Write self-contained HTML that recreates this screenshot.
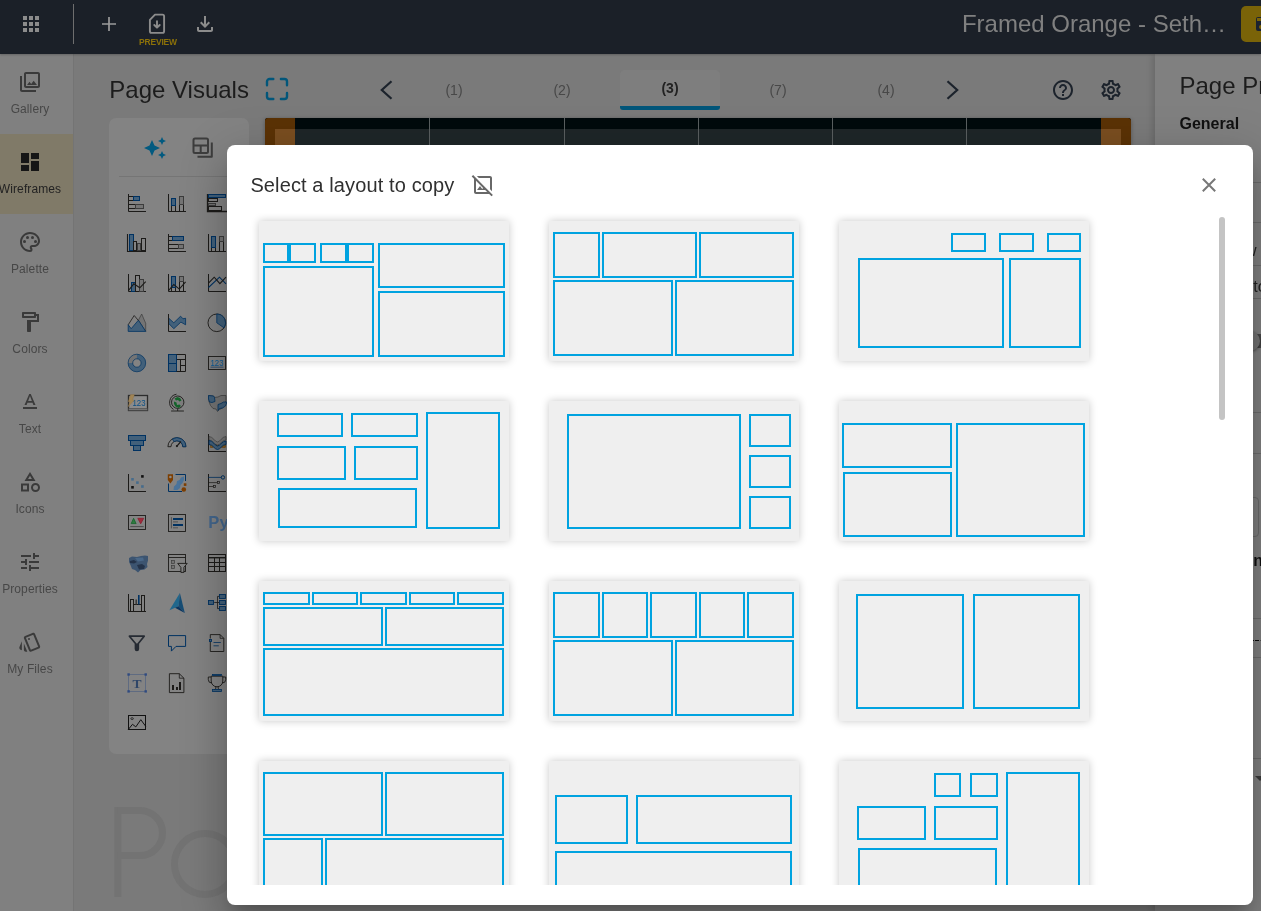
<!DOCTYPE html>
<html>
<head>
<meta charset="utf-8">
<title>Select a layout to copy</title>
<style>
*{box-sizing:border-box;margin:0;padding:0}
html,body{width:1261px;height:911px;overflow:hidden}
body{font-family:"Liberation Sans",sans-serif;background:#7a7a7a;position:relative;color:#1a1a1a}
.abs{position:absolute}
#root{position:absolute;left:0;top:0;width:1261px;height:911px;will-change:transform}
#topbar{position:absolute;left:0;top:0;width:1261px;height:54px;background:#1b2028;box-shadow:0 1px 2px rgba(0,0,0,.22);z-index:2}
#sidebar{position:absolute;left:0;top:54px;width:74px;height:857px;background:#808080;border-right:1px solid #747474}
.sitem{position:absolute;left:0;width:73px;height:80px;text-align:center}
.sitem svg{position:absolute;left:18px;top:16px}
.sitem span{position:absolute;left:-20px;width:100px;top:48px;font-size:12px;line-height:14px;color:#474747;letter-spacing:.1px}
.sitem.active{background:#807a68}
.sitem.active span{color:#222}
#vpanel{position:absolute;left:109px;top:118px;width:140px;height:636px;background:#838383;border-radius:7px}
.vi{position:absolute;width:20px;height:20px}
#rpanel{position:absolute;left:1155px;top:54px;width:106px;height:857px;background:#808080;box-shadow:-2px 0 7px rgba(0,0,0,.16)}
#modal{position:absolute;left:227px;top:145px;width:1026px;height:760px;background:#fff;border-radius:8px;
 box-shadow:0 11px 15px -7px rgba(0,0,0,.2),0 24px 38px 3px rgba(0,0,0,.14),0 9px 46px 8px rgba(0,0,0,.12)}
#scroll{position:absolute;left:0;top:68px;width:1026px;height:672px;overflow:hidden}
.card{position:absolute;width:250px;height:140px;background:#efefef;box-shadow:0 0 8px rgba(0,0,0,.22)}
.card svg{display:block}
.card rect{fill:none;stroke:#00a3e0;stroke-width:2;shape-rendering:crispEdges}
.tab{position:absolute;top:82px;width:60px;text-align:center;font-size:14px;line-height:16px;color:#484848}
</style>
</head>
<body>
<div id="root">
<!-- top bar -->
<div id="topbar">
  <svg class="abs" style="left:19px;top:12px" width="24" height="24" viewBox="0 0 24 24" fill="#8c8c8c"><path d="M4 8h4V4H4v4zm6 12h4v-4h-4v4zm-6 0h4v-4H4v4zm0-6h4v-4H4v4zm6 0h4v-4h-4v4zm6-10v4h4V4h-4zm-6 4h4V4h-4v4zm6 6h4v-4h-4v4zm0 6h4v-4h-4v4z"/></svg>
  <div class="abs" style="left:73px;top:4px;width:1px;height:40px;background:#6e6e6e"></div>
  <svg class="abs" style="left:97px;top:12px" width="24" height="24" viewBox="0 0 24 24" fill="none" stroke="#9a9a9a" stroke-width="1.7"><path d="M12 5v14M5 12h14"/></svg>
  <svg class="abs" style="left:145px;top:10px" width="24" height="26" viewBox="0 0 24 26" fill="none" stroke="#8c8c8c" stroke-width="1.9" stroke-linejoin="round" stroke-linecap="round"><path d="M10 4.6H17.5a1.6 1.6 0 0 1 1.6 1.6V21.300a1.600 1.600 0 0 1-1.600 1.600H6.500a1.600 1.600 0 0 1-1.600-1.600V9.800Z"/><path d="M12 11.300v6M9.300 15l2.700 2.700 2.700-2.700"/></svg>
  <div class="abs" style="left:132px;top:37px;width:52px;text-align:center;font-size:8.5px;font-weight:bold;color:#8c7109;letter-spacing:-.2px;line-height:10px">PREVIEW</div>
  <svg class="abs" style="left:193px;top:12px" width="24" height="24" viewBox="0 0 24 24" fill="#8c8c8c"><path d="M18 15v3H6v-3H4v3c0 1.1.9 2 2 2h12c1.1 0 2-.9 2-2v-3h-2zm-1-4l-1.410-1.410L13 12.170V4h-2v8.170L8.410 9.590 7 11l5 5 5-5z"/></svg>
  <div class="abs" style="left:900px;top:10px;width:326px;text-align:right;font-size:24px;line-height:28px;color:#808080;white-space:nowrap">Framed Orange - Seth…</div>
  <div class="abs" style="left:1241px;top:6px;width:30px;height:36px;background:#7a6308;border-radius:5px"></div>
  <div class="abs" style="left:1255.500px;top:16.800px;width:10px;height:14.700px;background:#1b2230;border-radius:2px 0 0 2px"></div><div class="abs" style="left:1257.200px;top:18.300px;width:6px;height:3px;background:#7a6308"></div><div class="abs" style="left:1259.300px;top:25.300px;width:4px;height:4px;border-radius:2px;background:#7a6308"></div>
</div>
<!-- sidebar -->
<div id="sidebar">
  <div class="sitem" style="top:0"><svg width="24" height="24" viewBox="0 0 24 24" fill="#3a3a3a" ><path d="M20 4v12H8V4h12m0-2H8c-1.100 0-2 .9-2 2v12c0 1.100.9 2 2 2h12c1.100 0 2-.9 2-2V4c0-1.100-.9-2-2-2zm-8.500 9.670l1.690 2.260 2.480-3.100L19 15H9zM2 6v14c0 1.100.9 2 2 2h14v-2H4V6H2z"/></svg><span>Gallery</span></div>
  <div class="sitem active" style="top:80px"><svg width="24" height="24" viewBox="0 0 24 24" fill="#161616"><path d="M3 13h8V3H3v10zm0 8h8v-6H3v6zm10 0h8V11h-8v10zm0-18v6h8V3h-8z"/></svg><span>Wireframes</span></div>
  <div class="sitem" style="top:160px"><svg width="24" height="24" viewBox="0 0 24 24" fill="#3a3a3a"><path d="M12 22C6.490 22 2 17.510 2 12S6.490 2 12 2s10 4.040 10 9c0 3.310-2.690 6-6 6h-1.770c-.28 0-.5.220-.5.500 0 .12.050.23.130.33.410.47.640 1.060.640 1.670A2.500 2.500 0 0 1 12 22zm0-18c-4.410 0-8 3.590-8 8s3.590 8 8 8c.28 0 .5-.22.5-.5a.54.54 0 0 0-.14-.35c-.41-.46-.63-1.050-.63-1.650a2.500 2.500 0 0 1 2.500-2.500H16c2.210 0 4-1.790 4-4 0-3.860-3.590-7-8-7z"/><circle cx="6.500" cy="11.500" r="1.500"/><circle cx="9.500" cy="7.500" r="1.500"/><circle cx="14.500" cy="7.500" r="1.500"/><circle cx="17.500" cy="11.500" r="1.500"/></svg><span>Palette</span></div>
  <div class="sitem" style="top:240px"><svg width="24" height="24" viewBox="0 0 24 24" fill="#3a3a3a"><path d="M18 4V3c0-.55-.45-1-1-1H5c-.55 0-1 .45-1 1v4c0 .55.450 1 1 1h12c.55 0 1-.45 1-1V6h1v4H9v11c0 .55.450 1 1 1h2c.55 0 1-.45 1-1v-9h8V4h-3zM16 6H6V4h10v2z"/></svg><span>Colors</span></div>
  <div class="sitem" style="top:320px"><svg width="24" height="24" viewBox="0 0 24 24" fill="#3a3a3a"><path d="M5 17v2h14v-2H5zm4.500-4.200h5l.9 2.200h2.100L12.750 4h-1.500L6.500 15h2.100l.9-2.200zM12 5.980L13.870 11h-3.740L12 5.980z"/></svg><span>Text</span></div>
  <div class="sitem" style="top:400px"><svg width="24" height="24" viewBox="0 0 24 24" fill="#3a3a3a"><path d="M12 2l-5.500 9h11L12 2zm0 3.840L13.930 9h-3.870L12 5.840zM17.500 13c-2.490 0-4.500 2.010-4.500 4.500s2.010 4.500 4.500 4.500 4.500-2.010 4.500-4.500-2.010-4.500-4.500-4.500zm0 7a2.500 2.500 0 0 1 0-5 2.500 2.500 0 0 1 0 5zM3 21.500h8v-8H3v8zm2-6h4v4H5v-4z"/></svg><span>Icons</span></div>
  <div class="sitem" style="top:480px"><svg width="24" height="24" viewBox="0 0 24 24" fill="#3a3a3a"><path d="M3 17v2h6v-2H3zM3 5v2h10V5H3zm10 16v-2h8v-2h-8v-2h-2v6h2zM7 9v2H3v2h4v2h2V9H7zm14 4v-2H11v2h10zm-6-4h2V7h4V5h-4V3h-2v6z"/></svg><span>Properties</span></div>
  <div class="sitem" style="top:560px"><svg width="24" height="24" viewBox="0 0 24 24" fill="#3a3a3a"><path d="M2.530 19.650l1.340.56v-9.030l-2.430 5.860c-.41 1.020.080 2.190 1.090 2.610zm19.500-3.700L17.070 3.980c-.31-.75-1.040-1.210-1.810-1.230-.26 0-.53.040-.79.150L7.100 5.950c-.75.310-1.210 1.030-1.230 1.800-.01.270.04.540.15.800l4.960 11.970c.31.760 1.050 1.220 1.830 1.230.26 0 .52-.05.77-.15l7.360-3.050c1.020-.42 1.510-1.590 1.090-2.600zm-9.200 3.800L7.870 7.790l7.350-3.040h.01l4.950 11.950-7.350 3.050zM5.880 19.750c0 1.100.9 2 2 2h1.450l-3.450-8.340v6.340z"/><circle cx="11" cy="9" r="1"/></svg><span>My Files</span></div>
</div>
<!-- header -->
<div class="abs" style="left:109.300px;top:75.800px;font-size:24px;line-height:28px;color:#1c1c1c;white-space:nowrap">Page Visuals</div>
<svg class="abs" style="left:265px;top:77px" width="24" height="24" viewBox="0 0 24 24" fill="none" stroke="#02567a" stroke-width="2.400" stroke-linecap="round" stroke-linejoin="round"><path d="M2 8.300V4.500a2.500 2.500 0 0 1 2.500-2.500H8.300M15.900 2h3.600a2.500 2.500 0 0 1 2.500 2.500V8.300M22 15.900v3.600a2.500 2.500 0 0 1-2.500 2.500H15.900M8.300 22H4.500a2.500 2.500 0 0 1-2.500-2.500V15.900"/></svg>
<svg class="abs" style="left:376px;top:78px" width="24" height="24" viewBox="0 0 24 24" fill="none" stroke="#1c232c" stroke-width="2.200"><path d="M15.500 3.200L5.800 12l9.700 8.800"/></svg>
<svg class="abs" style="left:939px;top:78px" width="24" height="24" viewBox="0 0 24 24" fill="none" stroke="#1c232c" stroke-width="2.200"><path d="M8.500 3.200L18.200 12l-9.700 8.800"/></svg>
<div class="abs" style="left:620px;top:70px;width:100px;height:40px;background:#7e7e7e;border-radius:5px 5px 3px 3px;border-bottom:4px solid #02567a"></div>
<div class="tab" style="left:424px">(1)</div>
<div class="tab" style="left:532px">(2)</div>
<div class="tab" style="left:640px;top:80px;font-weight:bold;color:#222">(3)</div>
<div class="tab" style="left:748px">(7)</div>
<div class="tab" style="left:856px">(4)</div>
<svg class="abs" style="left:1051px;top:78px" width="24" height="24" viewBox="0 0 24 24" fill="#1c232c"><path d="M11 18h2v-2h-2v2zm1-16C6.480 2 2 6.480 2 12s4.480 10 10 10 10-4.480 10-10S17.520 2 12 2zm0 18c-4.410 0-8-3.590-8-8s3.590-8 8-8 8 3.590 8 8-3.590 8-8 8zm0-14c-2.210 0-4 1.790-4 4h2c0-1.100.9-2 2-2s2 .9 2 2c0 2-3 1.750-3 5h2c0-2.250 3-2.500 3-5 0-2.210-1.790-4-4-4z"/></svg>
<svg class="abs" style="left:1099px;top:78px" width="24" height="24" viewBox="0 0 24 24" fill="#1c232c"><path d="M19.430 12.980c.04-.32.070-.64.070-.98 0-.34-.03-.66-.07-.98l2.110-1.650c.19-.15.240-.42.120-.64l-2-3.460c-.09-.16-.26-.25-.44-.25-.06 0-.12.010-.17.030l-2.490 1c-.52-.4-1.080-.73-1.690-.98l-.38-2.650C14.460 2.180 14.250 2 14 2h-4c-.25 0-.46.180-.49.420l-.38 2.650c-.61.250-1.170.590-1.690.98l-2.490-1c-.06-.02-.12-.03-.18-.03-.17 0-.34.090-.43.250l-2 3.460c-.13.220-.07.490.12.640l2.110 1.650c-.04.320-.07.650-.07.980 0 .33.030.66.070.98l-2.110 1.650c-.19.150-.24.420-.12.640l2 3.460c.09.160.26.250.44.250.06 0 .12-.01.170-.03l2.490-1c.52.400 1.080.73 1.690.98l.38 2.650c.03.240.24.420.49.420h4c.25 0 .46-.18.490-.42l.38-2.650c.61-.25 1.170-.59 1.690-.98l2.490 1c.06.020.12.030.18.030.17 0 .34-.09.43-.25l2-3.460c.12-.22.070-.49-.12-.64l-2.110-1.650zm-1.980-1.710c.04.310.050.520.050.730 0 .21-.02.430-.05.730l-.14 1.130.89.700 1.080.84-.7 1.210-1.270-.51-1.040-.42-.9.680c-.43.320-.84.560-1.250.73l-1.060.43-.16 1.130-.2 1.350h-1.400l-.19-1.350-.16-1.130-1.060-.43c-.43-.18-.83-.41-1.230-.71l-.91-.7-1.060.43-1.270.51-.7-1.210 1.080-.84.890-.7-.14-1.130c-.03-.31-.05-.54-.05-.74s.020-.43.050-.73l.14-1.130-.89-.7-1.080-.84.700-1.210 1.270.51 1.040.42.900-.68c.43-.32.840-.56 1.250-.73l1.060-.43.160-1.130.2-1.350h1.390l.19 1.350.16 1.130 1.060.43c.43.180.83.410 1.230.71l.91.700 1.060-.43 1.270-.51.700 1.210-1.070.85-.89.700.14 1.130zM12 8c-2.210 0-4 1.790-4 4s1.790 4 4 4 4-1.790 4-4-1.790-4-4-4zm0 6c-1.100 0-2-.9-2-2s.9-2 2-2 2 .9 2 2-.9 2-2 2z"/></svg>
<!-- canvas -->
<div class="abs" style="left:265px;top:118px;width:866px;height:60px;background:#1e2628;border-radius:3px 3px 0 0;overflow:hidden;box-shadow:0 1px 4px rgba(0,0,0,.3)">
  <div class="abs" style="left:0;top:0;width:866px;height:11px;background:#000a0c"></div>
  <div class="abs" style="left:0;top:0;width:30px;height:60px;background:#5b3205"></div>
  <div class="abs" style="left:10px;top:11px;width:20px;height:60px;background:#7a4e20"></div>
  <div class="abs" style="left:836px;top:0;width:30px;height:60px;background:#5b3205"></div>
  <div class="abs" style="left:836px;top:11px;width:20px;height:60px;background:#7a4e20"></div>
  <div class="abs" style="left:164px;top:0;width:1px;height:60px;background:#5a5f60"></div>
  <div class="abs" style="left:299px;top:0;width:1px;height:60px;background:#5a5f60"></div>
  <div class="abs" style="left:433px;top:0;width:1px;height:60px;background:#5a5f60"></div>
  <div class="abs" style="left:567px;top:0;width:1px;height:60px;background:#5a5f60"></div>
  <div class="abs" style="left:701px;top:0;width:1px;height:60px;background:#5a5f60"></div>
</div>
<!-- visuals panel -->
<div id="vpanel">
  <svg class="abs" style="left:34px;top:18px" width="24" height="24" viewBox="0 0 24 24" fill="#025a80"><path d="M19 9l1.250-2.750L23 5l-2.750-1.250L19 1l-1.250 2.750L15 5l2.750 1.250L19 9zm-7.500.5L9 4 6.500 9.500 1 12l5.500 2.500L9 20l2.500-5.500L17 12l-5.500-2.500zM19 15l-1.250 2.750L15 19l2.750 1.250L19 23l1.250-2.750L23 19l-2.750-1.250L19 15z"/></svg>
  <svg class="abs" style="left:83px;top:19px" width="22" height="22" viewBox="0 0 22 22" fill="none" stroke="#3d3d3d" stroke-width="2" stroke-linejoin="round"><rect x="1.500" y="1.500" width="14.500" height="14.500" rx="1.500"/><path d="M1.500 8.500H16M8.700 8.500V16"/><path d="M19.800 5.500V19.800H5.500"/></svg>
  <div class="abs" style="left:10px;top:58px;width:140px;height:1px;background:#757575"></div>
<svg class="vi" style="left:18px;top:75px" width="20" height="20" viewBox="0 0 20 20" overflow="visible"><path d="M1.5 1V18.5H19" fill="none" stroke="#1c1b19" stroke-width="1"/><rect x="1.5" y="3.5" width="11.00" height="4.00" fill="none" stroke="#1c1b19" stroke-width="1"/><rect x="6.5" y="3.5" width="6.00" height="4.00" fill="#42607a" stroke="#003262" stroke-width="1"/><rect x="1.5" y="11.5" width="15.00" height="4.00" fill="none" stroke="#1c1b19" stroke-width="1"/><rect x="8.5" y="11.5" width="8.00" height="4.00" fill="#747474" stroke="#3c3c3c" stroke-width="1"/></svg>
<svg class="vi" style="left:58px;top:75px" width="20" height="20" viewBox="0 0 20 20" overflow="visible"><path d="M1.5 1V18.5H19" fill="none" stroke="#1c1b19" stroke-width="1"/><rect x="4.5" y="5.5" width="4.00" height="13.00" fill="none" stroke="#1c1b19" stroke-width="1"/><rect x="4.5" y="5.5" width="4.00" height="7.00" fill="#42607a" stroke="#003262" stroke-width="1"/><rect x="12.5" y="3.5" width="4.00" height="15.00" fill="none" stroke="#1c1b19" stroke-width="1"/><rect x="12.5" y="3.5" width="4.00" height="8.00" fill="#747474" stroke="#3c3c3c" stroke-width="1"/></svg>
<svg class="vi" style="left:98px;top:75px" width="20" height="20" viewBox="0 0 20 20" overflow="visible"><path d="M0.5 1V18.5H20" fill="none" stroke="#1c1b19" stroke-width="1.3"/><rect x="1.5" y="1.5" width="17.00" height="3.00" fill="#42607a" stroke="#003262" stroke-width="1"/><rect x="1.5" y="5.5" width="9.00" height="3.00" fill="none" stroke="#1c1b19" stroke-width="1"/><rect x="1.5" y="10.5" width="7.00" height="2.00" fill="#747474" stroke="#3c3c3c" stroke-width="1"/><rect x="1.5" y="13.5" width="13.00" height="4.00" fill="none" stroke="#1c1b19" stroke-width="1"/></svg>
<svg class="vi" style="left:18px;top:115px" width="20" height="20" viewBox="0 0 20 20" overflow="visible"><path d="M0.5 1V18.5H19" fill="none" stroke="#1c1b19" stroke-width="1.1"/><rect x="2.5" y="1.5" width="4.00" height="16.00" fill="#42607a" stroke="#003262" stroke-width="1"/><rect x="6.5" y="8.5" width="3.00" height="9.00" fill="none" stroke="#1c1b19" stroke-width="1"/><rect x="10.5" y="10.5" width="3.00" height="7.00" fill="#747474" stroke="#3c3c3c" stroke-width="1"/><rect x="14.5" y="5.5" width="4.00" height="12.00" fill="none" stroke="#1c1b19" stroke-width="1"/></svg>
<svg class="vi" style="left:58px;top:115px" width="20" height="20" viewBox="0 0 20 20" overflow="visible"><path d="M1.5 1V18.5H19" fill="none" stroke="#1c1b19" stroke-width="1"/><rect x="1.5" y="3.5" width="15.00" height="4.00" fill="none" stroke="#1c1b19" stroke-width="1"/><rect x="5.5" y="3.5" width="11.00" height="4.00" fill="#42607a" stroke="#003262" stroke-width="1"/><rect x="1.5" y="11.5" width="15.00" height="4.00" fill="none" stroke="#1c1b19" stroke-width="1"/><rect x="11.5" y="11.5" width="5.00" height="4.00" fill="#747474" stroke="#3c3c3c" stroke-width="1"/></svg>
<svg class="vi" style="left:98px;top:115px" width="20" height="20" viewBox="0 0 20 20" overflow="visible"><path d="M1.5 1V18.5H19" fill="none" stroke="#1c1b19" stroke-width="1"/><rect x="4.5" y="3.5" width="4.00" height="15.00" fill="none" stroke="#1c1b19" stroke-width="1"/><rect x="4.5" y="3.5" width="4.00" height="11.00" fill="#42607a" stroke="#003262" stroke-width="1"/><rect x="12.5" y="3.5" width="4.00" height="15.00" fill="none" stroke="#1c1b19" stroke-width="1"/><rect x="12.5" y="3.5" width="4.00" height="5.00" fill="#747474" stroke="#3c3c3c" stroke-width="1"/></svg>
<svg class="vi" style="left:18px;top:155px" width="20" height="20" viewBox="0 0 20 20" overflow="visible"><path d="M1.5 1V18.5H19" fill="none" stroke="#1c1b19" stroke-width="1"/><rect x="4.5" y="9.5" width="4.00" height="9.00" fill="#42607a" stroke="#003262" stroke-width="1"/><rect x="8.5" y="2.5" width="4.00" height="16.00" fill="none" stroke="#1c1b19" stroke-width="1"/><rect x="12.5" y="6.5" width="4.00" height="12.00" fill="#747474" stroke="#3c3c3c" stroke-width="1"/><path d="M1.6 17.4L6.8 10.8L12.8 14.8L18.7 8.6" fill="none" stroke="#1c1b19" stroke-width="1.1" stroke-linejoin="miter"/></svg>
<svg class="vi" style="left:58px;top:155px" width="20" height="20" viewBox="0 0 20 20" overflow="visible"><path d="M1.5 1V18.5H19" fill="none" stroke="#1c1b19" stroke-width="1"/><rect x="4.5" y="3.5" width="4.00" height="15.00" fill="none" stroke="#1c1b19" stroke-width="1"/><rect x="4.5" y="3.5" width="4.00" height="11.00" fill="#42607a" stroke="#003262" stroke-width="1"/><rect x="12.5" y="3.5" width="4.00" height="15.00" fill="none" stroke="#1c1b19" stroke-width="1"/><rect x="12.5" y="3.5" width="4.00" height="5.00" fill="#747474" stroke="#3c3c3c" stroke-width="1"/><path d="M1.7 17.4L6.8 11.5L12.3 16.1L18.6 8.8" fill="none" stroke="#1c1b19" stroke-width="1.1" stroke-linejoin="miter"/></svg>
<svg class="vi" style="left:98px;top:155px" width="20" height="20" viewBox="0 0 20 20" overflow="visible"><path d="M1.5 1V18.5H19" fill="none" stroke="#1c1b19" stroke-width="1"/><path d="M1.5 14.5L12.5 4.2L19 10.8" fill="none" stroke="#003262" stroke-width="1.1" stroke-linejoin="miter"/><path d="M1.5 10.2L7.2 4.2L12.9 10.6L19 4.2" fill="none" stroke="#1c1b19" stroke-width="1.1" stroke-linejoin="miter"/></svg>
<svg class="vi" style="left:18px;top:195px" width="20" height="20" viewBox="0 0 20 20" overflow="visible"><path d="M11.4 7.2L14.7 1L18.7 10.4L18.7 18.4Z" fill="#747474" stroke="#3c3c3c" stroke-width="0.7" stroke-linejoin="miter"/><path d="M1.2 18.4L1.2 11.8L4.2 15.7L11.4 7.2L18.7 18.4Z" fill="#42607a" stroke="#003262" stroke-width="0.8" stroke-linejoin="miter"/><path d="M1.2 11.8L7.2 2.5L11.4 7.5" fill="none" stroke="#1c1b19" stroke-width="0.8" stroke-linejoin="miter"/></svg>
<svg class="vi" style="left:58px;top:195px" width="20" height="20" viewBox="0 0 20 20" overflow="visible"><path d="M1.7 5.2L6.8 9.8L13.6 3.2L16 5.8L18.6 5.2L18.6 11.8L13.9 9.1L6.8 15.7L1.7 10.4Z" fill="#42607a" stroke="#003262" stroke-width="0.8" stroke-linejoin="miter"/><path d="M1.5 1V18.5H19" fill="none" stroke="#1c1b19" stroke-width="1"/></svg>
<svg class="vi" style="left:98px;top:195px" width="20" height="20" viewBox="0 0 20 20" overflow="visible"><circle cx="9.8" cy="9.8" r="8.8" fill="none" stroke="#1c1b19" stroke-width="0.9"/><path d="M9.8 9.8V1A8.8 8.8 0 0 1 17 14.850Z" fill="#42607a" stroke="#003262" stroke-width="0.8"/></svg>
<svg class="vi" style="left:18px;top:235px" width="20" height="20" viewBox="0 0 20 20" overflow="visible"><circle cx="9.9" cy="10" r="6.5" fill="none" stroke="#747474" stroke-width="4.600"/><path d="M9.9 3.5A6.500 6.500 0 1 1 3.400 10" fill="none" stroke="#42607a" stroke-width="4.600"/><circle cx="9.9" cy="10" r="8.800" fill="none" stroke="#003262" stroke-width="0.700"/><circle cx="9.900" cy="10" r="4.200" fill="none" stroke="#003262" stroke-width="0.700"/></svg>
<svg class="vi" style="left:58px;top:235px" width="20" height="20" viewBox="0 0 20 20" overflow="visible"><rect x="1.5" y="1.5" width="8.00" height="17.00" fill="#42607a" stroke="#003262" stroke-width="1"/><path d="M1.5 10.5L9.5 10.5" fill="none" stroke="#003262" stroke-width="1" stroke-linejoin="miter"/><path d="M9.5 1.5L18.5 1.5L18.5 18.5L9.5 18.5" fill="none" stroke="#1c1b19" stroke-width="1" stroke-linejoin="miter"/><path d="M10 6.5L18.5 6.5" fill="none" stroke="#1c1b19" stroke-width="1" stroke-linejoin="miter"/><path d="M13.5 6.5L13.5 18.5" fill="none" stroke="#1c1b19" stroke-width="1" stroke-linejoin="miter"/><path d="M13.5 12.5L18.5 12.5" fill="none" stroke="#1c1b19" stroke-width="1" stroke-linejoin="miter"/></svg>
<svg class="vi" style="left:98px;top:235px" width="20" height="20" viewBox="0 0 20 20" overflow="visible"><rect x="1.5" y="3.5" width="17.00" height="13.00" fill="none" stroke="#1c1b19" stroke-width="0.9"/><text x="10" y="12.600" font-size="9.500" text-anchor="middle" fill="#0b5a96" font-family="Liberation Sans" textLength="13" lengthAdjust="spacingAndGlyphs">123</text><path d="M3.5 14.2L16.5 14.2" fill="none" stroke="#003262" stroke-width="0.6" stroke-linejoin="miter"/></svg>
<svg class="vi" style="left:18px;top:275px" width="20" height="20" viewBox="0 0 20 20" overflow="visible"><rect x="1.5" y="2.5" width="19.00" height="15.00" fill="#8b8b8b" stroke="#2c2c2c" stroke-width="1.3"/><rect x="1.5" y="15.5" width="19.00" height="2.00" fill="#747474" stroke="#3c3c3c" stroke-width="0.5"/><text x="12" y="12.500" font-size="9.500" text-anchor="middle" fill="#0a4f85" font-family="Liberation Sans" textLength="13" lengthAdjust="spacingAndGlyphs">123</text><path d="M3.5 1.6L7.5 1.6L5.5 6.9L7.5 6.9L0.9 14.1L2.9 8.8L1.2 8.8Z" fill="#a08455" stroke="#8a7045" stroke-width="0.3" stroke-linejoin="miter"/></svg>
<svg class="vi" style="left:58px;top:275px" width="20" height="20" viewBox="0 0 20 20" overflow="visible"><circle cx="10.700" cy="9.200" r="6.200" fill="#7d7d7d" stroke="#1c1b19" stroke-width="0.900"/><path d="M7.500 5.500l3-1.500 2.500 1 1.500 2.500-2 1-1.500-1.500-2 .5zM7 8.500l2.500 1 .5 2.500 2.500-.5 1.500 1.500-2.500 2-3-1.500-1.500-2.500z" fill="#14642a"/><path d="M9.500 1.200A8.300 8.300 0 0 0 6.500 16.400" fill="none" stroke="#1c1b19" stroke-width="0.900"/><path d="M10.7 15.6L10.7 18" fill="none" stroke="#1c1b19" stroke-width="0.9" stroke-linejoin="miter"/><path d="M4.1 18L16.9 18" fill="none" stroke="#1c1b19" stroke-width="0.9" stroke-linejoin="miter"/></svg>
<svg class="vi" style="left:98px;top:275px" width="20" height="20" viewBox="0 0 20 20" overflow="visible"><path d="M1.500 2.500l5 .5 1 1.500 3.500-.5 3-1.500h5v5l-1.500 4-2 3.500-3 1.500-2 2-1.500-2.500-3-.5-2.500-3-1.500-4z" fill="#747474" stroke="#3c3c3c" stroke-width="0.700"/><path d="M1.500 2.500l5 .5 1 1.500.5 4-3 1-2.500-.5-1-3z" fill="#42607a" stroke="#003262" stroke-width="0.800"/><path d="M11 11.500l3-1 2.500-1.500h3.500l-1.500 4-3 2-3 .5-1.500 2z" fill="#42607a" stroke="#003262" stroke-width="0.800"/></svg>
<svg class="vi" style="left:18px;top:315px" width="20" height="20" viewBox="0 0 20 20" overflow="visible"><rect x="1.5" y="2.5" width="17.00" height="5.00" fill="#42607a" stroke="#003262" stroke-width="1"/><rect x="3.5" y="7.5" width="13.00" height="5.00" fill="#42607a" stroke="#003262" stroke-width="1"/><rect x="6.5" y="12.5" width="7.00" height="5.00" fill="#42607a" stroke="#003262" stroke-width="1"/></svg>
<svg class="vi" style="left:58px;top:315px" width="20" height="20" viewBox="0 0 20 20" overflow="visible"><path d="M0.900 13.700A9 9 0 0 1 18.900 13.700H15.800A5.900 5.900 0 0 0 4 13.700Z" fill="none" stroke="#1c1b19" stroke-width="0.900"/><path d="M5.400 5.900A9 9 0 0 1 18.900 13.700H15.800A5.900 5.900 0 0 0 6.900 8.600Z" fill="#42607a" stroke="#003262" stroke-width="0.800"/><path d="M9.9 13.1L13.9 8.5" fill="none" stroke="#1c1b19" stroke-width="1.2" stroke-linejoin="miter"/><circle cx="9.900" cy="13.100" r="1.100" fill="#1c1b19"/></svg>
<svg class="vi" style="left:98px;top:315px" width="20" height="20" viewBox="0 0 20 20" overflow="visible"><path d="M1.5 1V18.5H19" fill="none" stroke="#1c1b19" stroke-width="1"/><rect x="3.5" y="10.5" width="3.00" height="4.00" fill="#8a5a18" stroke="#6a4008" stroke-width="0.5"/><rect x="8.5" y="11.5" width="3.00" height="3.00" fill="#8a5a18" stroke="#6a4008" stroke-width="0.5"/><rect x="14.5" y="10.5" width="4.00" height="4.00" fill="#8a5a18" stroke="#6a4008" stroke-width="0.5"/><path d="M2 3.500C6 3.500 8 9 10.500 9S15 3.500 19 3.500V7C15 7 13.500 12 10.500 12S6 7 2 7Z" fill="#747474" stroke="#3c3c3c" stroke-width="0.600"/><path d="M2 7.500C6 7.500 8 13 10.500 13S15 8 19 8V11.500C15 11.500 13.500 16.500 10.500 16.500S6 11.500 2 11.500Z" fill="#42607a" stroke="#003262" stroke-width="0.900"/></svg>
<svg class="vi" style="left:18px;top:355px" width="20" height="20" viewBox="0 0 20 20" overflow="visible"><path d="M1.5 1V18.5H19" fill="none" stroke="#1c1b19" stroke-width="1"/><rect x="14.10" y="2.10" width="2.6" height="2.6" fill="#111"/><rect x="4.20" y="5.00" width="2.6" height="2.6" fill="#466c8c"/><rect x="9.10" y="8.30" width="2.6" height="2.6" fill="#466c8c"/><rect x="4.20" y="13.00" width="2.6" height="2.6" fill="#111"/><rect x="14.10" y="12.20" width="2.6" height="2.6" fill="#466c8c"/></svg>
<svg class="vi" style="left:58px;top:355px" width="20" height="20" viewBox="0 0 20 20" overflow="visible"><path d="M8.500 1.500H18.500V8M15 18.500H1.500V10.500" fill="none" stroke="#003262" stroke-width="1"/><path d="M17 3.500l-3 1-1.500 2.500-2.500 1-.5 3-2.500 2.500-.5 3.500h4l2.500-2 .5-3 2-2 1.500-3z" fill="#4a739a"/><path d="M0.800 1.200h5.200v5.800l-2.600 3.500-2.600-3.500z" fill="#7d3e00"/><circle cx="3.400" cy="4" r="1.300" fill="#8a8a8a"/><circle cx="16.800" cy="16.500" r="2.300" fill="#7d3e00"/><rect x="16.800" y="10.300" width="2.600" height="2.600" fill="#7d3e00"/></svg>
<svg class="vi" style="left:98px;top:355px" width="20" height="20" viewBox="0 0 20 20" overflow="visible"><path d="M1.5 1V18.5H19" fill="none" stroke="#1c1b19" stroke-width="1"/><path d="M1.3 4.4L14.5 4.4" fill="none" stroke="#003262" stroke-width="0.8" stroke-linejoin="miter"/><circle cx="15.900" cy="4.400" r="1.700" fill="none" stroke="#003262" stroke-width="1"/><path d="M1.3 9.6L10 9.6" fill="none" stroke="#1c1b19" stroke-width="0.7" stroke-linejoin="miter"/><rect x="10.5" y="8.5" width="2.00" height="2.00" fill="none" stroke="#1c1b19" stroke-width="0.7"/><path d="M1.3 13.5L6.2 13.5" fill="none" stroke="#1c1b19" stroke-width="0.7" stroke-linejoin="miter"/><rect x="6.5" y="12.5" width="2.00" height="2.00" fill="none" stroke="#1c1b19" stroke-width="0.7"/></svg>
<svg class="vi" style="left:18px;top:395px" width="20" height="20" viewBox="0 0 20 20" overflow="visible"><rect x="1.5" y="2.5" width="17.00" height="14.00" fill="none" stroke="#1c1b19" stroke-width="0.9"/><path d="M4.2 10.6L6.6 5.3L9.1 10.6Z" fill="#2f7a40" stroke="#14642a" stroke-width="0.8" stroke-linejoin="miter"/><path d="M10.8 5.3L16.7 5.3L13.7 10.8Z" fill="#a02a3c" stroke="#8a1f2f" stroke-width="0.8" stroke-linejoin="miter"/><path d="M3.3 13.6L16.7 13.6" fill="none" stroke="#3c3c3c" stroke-width="0.8" stroke-linejoin="miter"/></svg>
<svg class="vi" style="left:58px;top:395px" width="20" height="20" viewBox="0 0 20 20" overflow="visible"><rect x="1.5" y="1.5" width="17.00" height="17.00" fill="none" stroke="#1c1b19" stroke-width="0.9"/><path d="M4.4 4.2L4.4 15.4" fill="none" stroke="#3c3c3c" stroke-width="0.7" stroke-linejoin="miter"/><rect x="6" y="5" width="10.00" height="2.00" fill="#003262" stroke="none" stroke-width="0"/><rect x="6" y="11" width="10.00" height="2.00" fill="#003262" stroke="none" stroke-width="0"/><path d="M6 8.9L11 8.9" fill="none" stroke="#3c3c3c" stroke-width="0.7" stroke-linejoin="miter"/><path d="M6 14.8L11 14.8" fill="none" stroke="#3c3c3c" stroke-width="0.7" stroke-linejoin="miter"/></svg>
<svg class="vi" style="left:98px;top:395px" width="20" height="20" viewBox="0 0 20 20" overflow="visible"><text x="1.200" y="15.300" font-size="16.500" font-weight="bold" fill="#43668c" font-family="Liberation Sans" letter-spacing="0.300">Py</text></svg>
<svg class="vi" style="left:18px;top:435px" width="20" height="20" viewBox="0 0 20 20" overflow="visible"><path d="M2 5l3-1.500 5 .5 4-1 4-.5 3 .5v4.500l-1 3.500.5 3-3 2.500-4 .5-2.500 2.500-3-2.500-3-1-1.500-4-1.500-3z" fill="#3c5470" stroke="none"/><path d="M3 8l4-1 3 2-3 1.500-4-.5zM10 12l5-1 3 2-1 3-5 .5z" fill="#243349"/><path d="M8 5l8-.5 1 3-6 1z" fill="#4a6888"/></svg>
<svg class="vi" style="left:58px;top:435px" width="20" height="20" viewBox="0 0 20 20" overflow="visible"><rect x="1.5" y="1.5" width="17.00" height="17.00" fill="none" stroke="#1c1b19" stroke-width="0.9"/><path d="M1.5 4.5L18.6 4.5" fill="none" stroke="#1c1b19" stroke-width="0.9" stroke-linejoin="miter"/><rect x="4.5" y="7.5" width="3.00" height="3.00" fill="#747474" stroke="#3c3c3c" stroke-width="0.7"/><rect x="4.5" y="12.5" width="3.00" height="3.00" fill="#747474" stroke="#3c3c3c" stroke-width="0.7"/><path d="M10.7 10.4L20.2 10.4L16.9 14.4L16.9 19.4L13.9 19.4L13.9 14.4Z" fill="#838383" stroke="#1c1b19" stroke-width="0.9" stroke-linejoin="miter"/></svg>
<svg class="vi" style="left:98px;top:435px" width="20" height="20" viewBox="0 0 20 20" overflow="visible"><rect x="1.5" y="1.5" width="17.00" height="17.00" fill="none" stroke="#1c1b19" stroke-width="1"/><path d="M1.5 4.5L18.5 4.5" fill="none" stroke="#1c1b19" stroke-width="1" stroke-linejoin="miter"/><path d="M1.5 5.2L18.5 5.2" fill="none" stroke="#1c1b19" stroke-width="0.6" stroke-linejoin="miter"/><path d="M1.5 9.5L18.5 9.5" fill="none" stroke="#1c1b19" stroke-width="1" stroke-linejoin="miter"/><path d="M1.5 13.5L18.5 13.5" fill="none" stroke="#1c1b19" stroke-width="1" stroke-linejoin="miter"/><path d="M7.5 4.5L7.5 18.5" fill="none" stroke="#1c1b19" stroke-width="1" stroke-linejoin="miter"/><path d="M12.5 4.5L12.5 18.5" fill="none" stroke="#1c1b19" stroke-width="1" stroke-linejoin="miter"/></svg>
<svg class="vi" style="left:18px;top:475px" width="20" height="20" viewBox="0 0 20 20" overflow="visible"><path d="M1.5 1V18.5H19" fill="none" stroke="#1c1b19" stroke-width="1"/><rect x="3.5" y="6.5" width="3.00" height="12.00" fill="none" stroke="#1c1b19" stroke-width="1"/><path d="M6.5 11.5L14.5 11.5" fill="none" stroke="#1c1b19" stroke-width="1" stroke-linejoin="miter"/><path d="M9.2 6.5L9.2 11.5" fill="none" stroke="#3c3c3c" stroke-width="1.6" stroke-linejoin="miter"/><path d="M11.8 2L11.8 11.5" fill="none" stroke="#003262" stroke-width="1.6" stroke-linejoin="miter"/><rect x="14.5" y="2.5" width="3.00" height="16.00" fill="none" stroke="#1c1b19" stroke-width="1"/></svg>
<svg class="vi" style="left:58px;top:475px" width="20" height="20" viewBox="0 0 20 20" overflow="visible"><path d="M12.9 0.1L2.4 17.2L11.6 13.3Z" fill="#20678c" stroke="none" stroke-width="0" stroke-linejoin="miter"/><path d="M12.9 0.1L11.6 13.3L17.8 19.9Z" fill="#164d74" stroke="none" stroke-width="0" stroke-linejoin="miter"/><path d="M11.6 13.3L17.8 19.9L8 14.8Z" fill="#0a3560" stroke="none" stroke-width="0" stroke-linejoin="miter"/></svg>
<svg class="vi" style="left:98px;top:475px" width="20" height="20" viewBox="0 0 20 20" overflow="visible"><path d="M7.2 9.5L10.5 9.5" fill="none" stroke="#1c1b19" stroke-width="0.8" stroke-linejoin="miter"/><path d="M10.5 3.4L10.5 15.6" fill="none" stroke="#1c1b19" stroke-width="0.8" stroke-linejoin="miter"/><path d="M10.5 3.4L12.5 3.4" fill="none" stroke="#1c1b19" stroke-width="0.8" stroke-linejoin="miter"/><path d="M10.5 9.5L12.5 9.5" fill="none" stroke="#1c1b19" stroke-width="0.8" stroke-linejoin="miter"/><path d="M10.5 15.6L12.5 15.6" fill="none" stroke="#1c1b19" stroke-width="0.8" stroke-linejoin="miter"/><rect x="1.5" y="7.5" width="5.00" height="4.00" fill="#42607a" stroke="#003262" stroke-width="0.9"/><rect x="12.5" y="1.5" width="6.00" height="4.00" fill="#42607a" stroke="#003262" stroke-width="0.9"/><rect x="12.5" y="7.5" width="6.00" height="4.00" fill="#42607a" stroke="#003262" stroke-width="0.9"/><rect x="12.5" y="13.5" width="6.00" height="4.00" fill="#42607a" stroke="#003262" stroke-width="0.9"/></svg>
<svg class="vi" style="left:18px;top:515px" width="20" height="20" viewBox="0 0 20 20" overflow="visible"><path d="M2.400 3.200H17.200L11.300 10.500V16a1.400 1.400 0 0 1-2.800 0V10.500Z" fill="none" stroke="#262b33" stroke-width="1.700" stroke-linejoin="round"/><path d="M8.500 10.500h2.800V16a1.400 1.400 0 0 1-2.800 0Z" fill="#262b33"/></svg>
<svg class="vi" style="left:58px;top:515px" width="20" height="20" viewBox="0 0 20 20" overflow="visible"><path d="M1.5 2.6L18.6 2.6L18.6 13.4L9 13.4L4.4 18.1L4.4 13.4L1.5 13.4Z" fill="none" stroke="#003262" stroke-width="1" stroke-linejoin="miter"/></svg>
<svg class="vi" style="left:98px;top:515px" width="20" height="20" viewBox="0 0 20 20" overflow="visible"><path d="M3.3 8.5L3.3 18.5L16.8 18.5L16.8 5.3L13.1 1.6L3.3 1.6L3.3 5.5" fill="none" stroke="#1c1b19" stroke-width="0.9" stroke-linejoin="miter"/><path d="M13.1 1.6L13.1 5.3L16.8 5.3" fill="none" stroke="#1c1b19" stroke-width="0.8" stroke-linejoin="miter"/><rect x="2.5" y="6.5" width="2.00" height="2.00" fill="#42607a" stroke="#003262" stroke-width="0.9"/><path d="M6.5 9.5L13.8 9.5" fill="none" stroke="#003262" stroke-width="0.8" stroke-linejoin="miter"/><path d="M6.5 12.8L11.8 12.8" fill="none" stroke="#003262" stroke-width="0.8" stroke-linejoin="miter"/></svg>
<svg class="vi" style="left:18px;top:555px" width="20" height="20" viewBox="0 0 20 20" overflow="visible"><rect x="1.5" y="1.5" width="17.00" height="17.00" fill="none" stroke="#3c5580" stroke-width="0.5"/><rect x="0.40" y="0.30" width="2.400" height="2.400" fill="#2f4a80"/><rect x="17.50" y="0.30" width="2.400" height="2.400" fill="#2f4a80"/><rect x="0.40" y="17.20" width="2.400" height="2.400" fill="#2f4a80"/><rect x="17.50" y="17.20" width="2.400" height="2.400" fill="#2f4a80"/><text x="10.100" y="14.600" font-size="13.500" font-weight="bold" text-anchor="middle" fill="#2f4668" font-family="Liberation Serif">T</text></svg>
<svg class="vi" style="left:58px;top:555px" width="20" height="20" viewBox="0 0 20 20" overflow="visible"><path d="M2.4 0.7L12.3 0.7L16.9 5.2L16.9 19.6L2.4 19.6Z" fill="none" stroke="#1c1b19" stroke-width="0.9" stroke-linejoin="miter"/><path d="M12.3 0.7L12.3 5.2L16.9 5.2" fill="none" stroke="#1c1b19" stroke-width="0.8" stroke-linejoin="miter"/><rect x="5" y="12" width="2.00" height="5.00" fill="#1c1b19" stroke="none" stroke-width="0"/><rect x="9" y="14" width="2.00" height="3.00" fill="#1c1b19" stroke="none" stroke-width="0"/><rect x="12" y="9" width="2.00" height="8.00" fill="#1c1b19" stroke="none" stroke-width="0"/></svg>
<svg class="vi" style="left:98px;top:555px" width="20" height="20" viewBox="0 0 20 20" overflow="visible"><path d="M4.200 3.200H15.800V8A5.800 5.800 0 0 1 4.200 8Z" fill="none" stroke="#1c1b19" stroke-width="0.900"/><path d="M4.200 4H1.300V6.500A3.500 3.500 0 0 0 4.800 10M15.800 4H18.700V6.500A3.500 3.500 0 0 1 15.200 10" fill="none" stroke="#1c1b19" stroke-width="0.900"/><path d="M8.800 13.500V15.500L7 17H13L11.200 15.500V13.500" fill="none" stroke="#1c1b19" stroke-width="0.900"/><rect x="5.5" y="1.5" width="9.00" height="1.00" fill="#42607a" stroke="#003262" stroke-width="0.8"/><rect x="5.5" y="16.5" width="9.00" height="2.00" fill="#42607a" stroke="#003262" stroke-width="0.8"/></svg>
<svg class="vi" style="left:18px;top:595px" width="20" height="20" viewBox="0 0 20 20" overflow="visible"><rect x="1.5" y="2.5" width="17.00" height="14.00" fill="none" stroke="#111" stroke-width="1"/><path d="M1.2 16.6L5.5 11.3L8.8 13.9L13.8 6.7L18.7 13.3" fill="none" stroke="#111" stroke-width="1" stroke-linejoin="miter"/><ellipse cx="5.100" cy="5.600" rx="1.300" ry="0.900" fill="none" stroke="#111" stroke-width="0.700"/></svg>
</div>
<!-- Po watermark -->
<svg class="abs" style="left:100px;top:790px" width="140" height="121" viewBox="0 0 140 121" fill="none" stroke="#737373" stroke-width="7"><path d="M17.800 107V17"/><path d="M17.800 20.500H40a22.500 22.500 0 0 1 0 45H17.800"/><ellipse cx="105" cy="74" rx="30.500" ry="30.500"/></svg>
<!-- right panel -->
<div id="rpanel">
  <div class="abs" style="left:24.500px;top:17.800px;font-size:24px;line-height:28px;color:#1c1c1c;white-space:nowrap">Page Properties</div>
  <div class="abs" style="left:24.500px;top:59.800px;font-size:16px;line-height:20px;font-weight:bold;color:#111">General</div>
  <div class="abs" style="left:0;top:128px;width:106px;height:1px;background:#6c6c6c"></div>
  <div class="abs" style="left:0;top:168px;width:106px;height:1px;background:#6c6c6c"></div>
  <div class="abs" style="left:0;top:211px;width:106px;height:1px;background:#6c6c6c"></div>
  <div class="abs" style="left:0;top:244px;width:106px;height:1px;background:#6c6c6c"></div>
  <div class="abs" style="left:0;top:358px;width:106px;height:1px;background:#6c6c6c"></div>
  <div class="abs" style="left:0;top:399px;width:106px;height:1px;background:#6c6c6c"></div>
  <div class="abs" style="left:0;top:564px;width:106px;height:1px;background:#6c6c6c"></div>
  <div class="abs" style="left:0;top:603px;width:106px;height:1px;background:#6c6c6c"></div>
  <div class="abs" style="left:0;top:704px;width:106px;height:1px;background:#6c6c6c"></div>
  <div class="abs" style="left:20px;top:443px;width:84px;height:40px;border:1px solid #6a6a6a;border-radius:4px"></div>
  <div class="abs" style="left:60px;top:187px;width:41.500px;text-align:right;font-size:16px;line-height:20px;color:#222">w</div>
  <div class="abs" style="left:98.300px;top:222.500px;font-size:16px;line-height:20px;color:#222;white-space:nowrap">tom</div><div class="abs" style="left:95px;top:280px;width:30px;height:14px;background:#484848;border-radius:7px"></div><div class="abs" style="left:85px;top:277px;width:20px;height:20px;border-radius:10px;background:#727272;box-shadow:0 1px 3px rgba(0,0,0,.4)"></div>
  <div class="abs" style="left:98.300px;top:496.500px;font-size:16px;line-height:20px;font-weight:bold;color:#111">n</div>
  <div class="abs" style="left:98px;top:586px;width:1px;height:1px;background:#111"></div><div class="abs" style="left:100px;top:586px;width:4px;height:1px;background:#0a0a0a"></div><div class="abs" style="left:105px;top:586px;width:1px;height:1px;background:#555"></div>
  <div class="abs" style="left:100px;top:722px;width:0;height:0;border-left:5px solid transparent;border-right:5px solid transparent;border-top:5px solid #3a3a3a"></div>
</div>

<div id="modal">
  <div class="abs" style="left:23.400px;top:28px;font-size:20px;line-height:24px;color:#303030;letter-spacing:.12px;white-space:nowrap">Select a layout to copy</div>
  <svg class="abs" style="left:244.200px;top:28.200px" width="24" height="24" viewBox="0 0 24 24" fill="#686868"><path d="M21.900 21.900l-8.490-8.490-9.820-9.820L2.100 2.100.69 3.510 3 5.830V19c0 1.100.9 2 2 2h13.170l2.310 2.310 1.420-1.410zM5 19V7.830l7.070 7.070-.82 1.100L9 13l-3 4h8.170l2 2H5zM7.830 5l-2-2H19c1.100 0 2 .9 2 2v13.170l-2-2V5H7.830z"/></svg>
<svg class="abs" style="left:973px;top:31px" width="18" height="18" viewBox="0 0 18 18" fill="none" stroke="#777" stroke-width="2"><path d="M2.800 2.800L15.200 15.200M15.200 2.800L2.800 15.200"/></svg>

  <div id="scroll">
<div class="card" style="left:32px;top:8px"><svg width="250" height="140" viewBox="0 0 250 140"><rect x="5" y="23" width="26" height="18"/><rect x="29" y="23" width="27" height="18"/><rect x="62" y="23" width="27" height="18"/><rect x="87" y="23" width="27" height="18"/><rect x="5" y="46" width="109" height="89"/><rect x="120" y="23" width="125" height="43"/><rect x="120" y="71" width="125" height="64"/></svg></div>
<div class="card" style="left:322px;top:8px"><svg width="250" height="140" viewBox="0 0 250 140"><rect x="5" y="12" width="45" height="44"/><rect x="54" y="12" width="93" height="44"/><rect x="151" y="12" width="93" height="44"/><rect x="5" y="60" width="118" height="74"/><rect x="127" y="60" width="117" height="74"/></svg></div>
<div class="card" style="left:612px;top:8px"><svg width="250" height="140" viewBox="0 0 250 140"><rect x="113" y="13" width="33" height="17"/><rect x="161" y="13" width="33" height="17"/><rect x="209" y="13" width="32" height="17"/><rect x="20" y="38" width="144" height="88"/><rect x="171" y="38" width="70" height="88"/></svg></div>
<div class="card" style="left:32px;top:188px"><svg width="250" height="140" viewBox="0 0 250 140"><rect x="19" y="13" width="64" height="22"/><rect x="93" y="13" width="65" height="22"/><rect x="19" y="46" width="67" height="32"/><rect x="96" y="46" width="62" height="32"/><rect x="20" y="88" width="137" height="38"/><rect x="168" y="12" width="72" height="115"/></svg></div>
<div class="card" style="left:322px;top:188px"><svg width="250" height="140" viewBox="0 0 250 140"><rect x="19" y="14" width="172" height="113"/><rect x="201" y="14" width="40" height="31"/><rect x="201" y="55" width="40" height="31"/><rect x="201" y="96" width="40" height="31"/></svg></div>
<div class="card" style="left:612px;top:188px"><svg width="250" height="140" viewBox="0 0 250 140"><rect x="4" y="23" width="108" height="43"/><rect x="5" y="72" width="107" height="63"/><rect x="118" y="23" width="127" height="112"/></svg></div>
<div class="card" style="left:32px;top:368px"><svg width="250" height="140" viewBox="0 0 250 140"><rect x="5" y="12" width="45" height="11"/><rect x="54" y="12" width="44" height="11"/><rect x="102" y="12" width="45" height="11"/><rect x="151" y="12" width="44" height="11"/><rect x="199" y="12" width="45" height="11"/><rect x="5" y="27" width="118" height="37"/><rect x="127" y="27" width="117" height="37"/><rect x="5" y="68" width="239" height="66"/></svg></div>
<div class="card" style="left:322px;top:368px"><svg width="250" height="140" viewBox="0 0 250 140"><rect x="5" y="12" width="45" height="44"/><rect x="54" y="12" width="44" height="44"/><rect x="102" y="12" width="45" height="44"/><rect x="151" y="12" width="44" height="44"/><rect x="199" y="12" width="45" height="44"/><rect x="5" y="60" width="118" height="74"/><rect x="127" y="60" width="117" height="74"/></svg></div>
<div class="card" style="left:612px;top:368px"><svg width="250" height="140" viewBox="0 0 250 140"><rect x="18" y="14" width="106" height="113"/><rect x="135" y="14" width="105" height="113"/></svg></div>
<div class="card" style="left:32px;top:548px"><svg width="250" height="140" viewBox="0 0 250 140"><rect x="5" y="12" width="118" height="62"/><rect x="127" y="12" width="117" height="62"/><rect x="5" y="78" width="58" height="56"/><rect x="67" y="78" width="177" height="56"/></svg></div>
<div class="card" style="left:322px;top:548px"><svg width="250" height="140" viewBox="0 0 250 140"><rect x="7" y="35" width="71" height="47"/><rect x="88" y="35" width="154" height="47"/><rect x="7" y="91" width="235" height="43"/></svg></div>
<div class="card" style="left:612px;top:548px"><svg width="250" height="140" viewBox="0 0 250 140"><rect x="96" y="13" width="25" height="22"/><rect x="132" y="13" width="26" height="22"/><rect x="19" y="46" width="67" height="32"/><rect x="96" y="46" width="62" height="32"/><rect x="20" y="88" width="137" height="38"/><rect x="168" y="12" width="72" height="115"/></svg></div>
  </div>
  <div class="abs" style="left:992px;top:72px;width:6px;height:203px;background:#c4c4c4;border-radius:3px"></div>
</div>
</div>
</body>
</html>
